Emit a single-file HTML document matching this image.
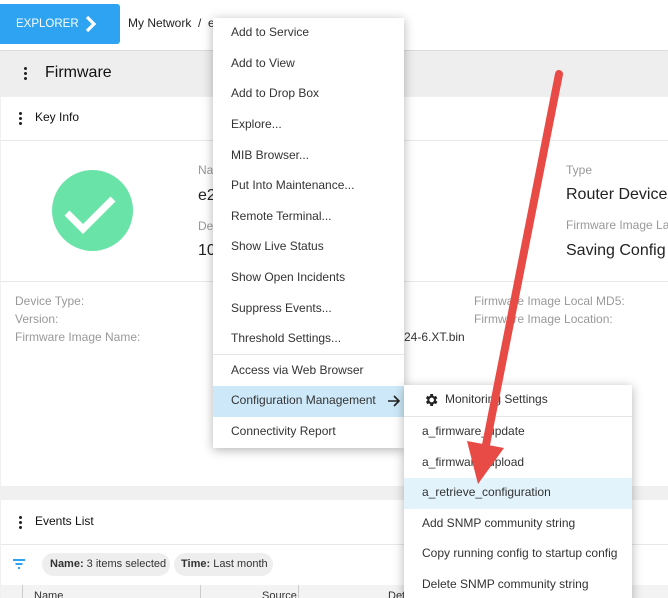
<!DOCTYPE html>
<html><head><style>
*{margin:0;padding:0;box-sizing:border-box}
html,body{width:668px;height:598px;overflow:hidden}
body{background:#f0f0f0;font-family:"Liberation Sans",sans-serif;position:relative;font-size:12px;color:#333}
.abs{position:absolute}
.dots{position:absolute;width:3px}
.dots i{display:block;width:3px;height:3px;background:#222;border-radius:50%;margin-bottom:2px}
.lbl{color:#999;font-size:12px}
.menu{position:absolute;background:#fff;box-shadow:0 2px 10px rgba(0,0,0,.3)}
.mi{position:absolute;left:0;right:0;height:31px;line-height:29px;padding-left:18px;font-size:12px;color:#333}
</style></head><body>
<div class="abs" style="left:0;top:0;width:668px;height:50px;background:#fff;box-shadow:0 2px 4px rgba(0,0,0,.12)"></div>
<div class="abs" style="left:0;top:4px;width:120px;height:40px;background:#2ea3f2;border-radius:0 3px 3px 0;color:#fff;font-size:11.5px;line-height:40px;padding-left:16px">EXPLORER
<svg class="abs" style="left:84px;top:11px" width="14" height="18" viewBox="0 0 14 18"><path d="M3 2l7 7-7 7" stroke="#fff" stroke-width="3.2" fill="none"/></svg></div>
<div class="abs" style="left:128px;top:16px;font-size:12px;color:#222">My Network &nbsp;/&nbsp; e</div>
<div class="abs" style="left:0;top:51px;width:668px;height:45px;background:#eee"></div>
<div class="dots" style="left:24px;top:67px"><i></i><i></i><i></i></div>
<div class="abs" style="left:45px;top:64px;font-size:16px;color:#111">Firmware</div>
<div class="abs" style="left:1px;top:97px;width:667px;height:389px;background:#fff"></div>
<div class="dots" style="left:19px;top:112px"><i></i><i></i><i></i></div>
<div class="abs" style="left:35px;top:110px;font-size:12px;color:#111">Key Info</div>
<div class="abs" style="left:1px;top:140px;width:667px;height:1px;background:#e8e8e8"></div>
<div class="abs" style="left:1px;top:281px;width:667px;height:1px;background:#e8e8e8"></div>
<svg class="abs" style="left:52px;top:170px" width="81" height="81" viewBox="0 0 81 81"><circle cx="40.5" cy="40.5" r="40.5" fill="#69e3a8"/><path d="M15 43l16 16 30-30" stroke="#fff" stroke-width="7" fill="none"/></svg>
<div class="abs lbl" style="left:198px;top:163px">Na</div>
<div class="abs" style="left:198px;top:187px;font-size:16px;color:#222">e2</div>
<div class="abs lbl" style="left:198px;top:219px">De</div>
<div class="abs" style="left:198px;top:242px;font-size:16px;color:#222">10</div>
<div class="abs lbl" style="left:566px;top:163px">Type</div>
<div class="abs" style="left:566px;top:186px;font-size:16px;color:#222;white-space:nowrap">Router Device</div>
<div class="abs lbl" style="left:566px;top:218px;white-space:nowrap">Firmware Image Las</div>
<div class="abs" style="left:566px;top:242px;font-size:16px;color:#222;white-space:nowrap">Saving Config</div>
<div class="abs lbl" style="left:15px;top:294px">Device Type:</div>
<div class="abs lbl" style="left:15px;top:312px">Version:</div>
<div class="abs lbl" style="left:15px;top:330px">Firmware Image Name:</div>
<div class="abs" style="left:404px;top:330px;color:#333">24-6.XT.bin</div>
<div class="abs lbl" style="left:474px;top:294px">Firmware Image Local MD5:</div>
<div class="abs lbl" style="left:474px;top:312px">Firmware Image Location:</div>
<div class="abs" style="left:1px;top:500px;width:667px;height:98px;background:#fff"></div>
<div class="dots" style="left:19px;top:516px"><i></i><i></i><i></i></div>
<div class="abs" style="left:35px;top:514px;color:#111">Events List</div>
<div class="abs" style="left:619px;top:515px;color:#5aaef0">ts</div>
<div class="abs" style="left:1px;top:544px;width:667px;height:1px;background:#e8e8e8"></div>
<svg class="abs" style="left:12px;top:558px" width="14" height="12"><path d="M1 2h12M3.5 6h7M6 10h2" stroke="#2ea3f2" stroke-width="2"/></svg>
<div class="abs" style="left:42px;top:553px;height:23px;width:128px;border-radius:12px;background:#eee;line-height:23px;padding-left:8px;font-size:11px"><b>Name:</b> 3 items selected</div>
<div class="abs" style="left:174px;top:553px;height:23px;width:99px;border-radius:12px;background:#eee;line-height:23px;padding-left:7px;font-size:11px"><b>Time:</b> Last month</div>
<div class="abs" style="left:1px;top:585px;width:667px;height:13px;background:#f3f3f3"></div>
<div class="abs" style="left:22px;top:585px;width:1px;height:13px;background:#ccc"></div>
<div class="abs" style="left:200px;top:585px;width:1px;height:13px;background:#ccc"></div>
<div class="abs" style="left:298px;top:585px;width:1px;height:13px;background:#ccc"></div>
<div class="abs" style="left:34px;top:590px;font-size:11px">Name</div>
<div class="abs" style="left:262px;top:590px;font-size:11px">Source</div>
<div class="abs" style="left:388px;top:590px;font-size:11px">Det</div>

<div class="menu" style="left:213px;top:18px;width:191px;height:430px">
<div class="mi" style="top:0">Add to Service</div>
<div class="mi" style="top:31px">Add to View</div>
<div class="mi" style="top:61px">Add to Drop Box</div>
<div class="mi" style="top:92px">Explore...</div>
<div class="mi" style="top:123px">MIB Browser...</div>
<div class="mi" style="top:153px">Put Into Maintenance...</div>
<div class="mi" style="top:184px">Remote Terminal...</div>
<div class="mi" style="top:214px">Show Live Status</div>
<div class="mi" style="top:245px">Show Open Incidents</div>
<div class="mi" style="top:276px">Suppress Events...</div>
<div class="mi" style="top:306px">Threshold Settings...</div>
<div class="abs" style="left:0;right:0;top:336px;height:1px;background:#e5e5e5"></div>
<div class="mi" style="top:338px">Access via Web Browser</div>
<div class="mi" style="top:368px;background:#cde9f9">Configuration Management</div>
<svg class="abs" style="left:174px;top:377px" width="14" height="12"><path d="M1 6h11M7 1l5 5-5 5" stroke="#222" stroke-width="1.6" fill="none"/></svg>
<div class="mi" style="top:399px">Connectivity Report</div>
</div>
<div class="menu" style="left:404px;top:385px;width:228px;height:220px">
<svg class="abs" style="left:19px;top:7px" width="16" height="16" viewBox="0 0 24 24"><path fill="#222" d="M19.4 13a7.5 7.5 0 000-2l2.1-1.6-2-3.5-2.5 1a7 7 0 00-1.7-1L15 3h-4l-.4 2.9a7 7 0 00-1.7 1l-2.5-1-2 3.5L6.6 11a7.5 7.5 0 000 2l-2.1 1.6 2 3.5 2.5-1a7 7 0 001.7 1L11 21h4l.4-2.9a7 7 0 001.7-1l2.5 1 2-3.5zM13 15.5a3.5 3.5 0 110-7 3.5 3.5 0 010 7z"/></svg>
<div class="mi" style="top:0;padding-left:41px">Monitoring Settings</div>
<div class="abs" style="left:0;right:0;top:31px;height:1px;background:#e5e5e5"></div>
<div class="mi" style="top:32px">a_firmware_update</div>
<div class="mi" style="top:63px">a_firmware_upload</div>
<div class="mi" style="top:93px;background:#e3f3fc">a_retrieve_configuration</div>
<div class="mi" style="top:124px">Add SNMP community string</div>
<div class="mi" style="top:154px">Copy running config to startup config</div>
<div class="mi" style="top:185px">Delete SNMP community string</div>
</div>
<svg class="abs" style="left:0;top:0" width="668" height="598">
<line x1="559" y1="74" x2="485" y2="450" stroke="#e84a45" stroke-width="8" stroke-linecap="round"/>
<polygon points="478,484 467,441 504,448" fill="#e84a45"/>
</svg>
</body></html>
